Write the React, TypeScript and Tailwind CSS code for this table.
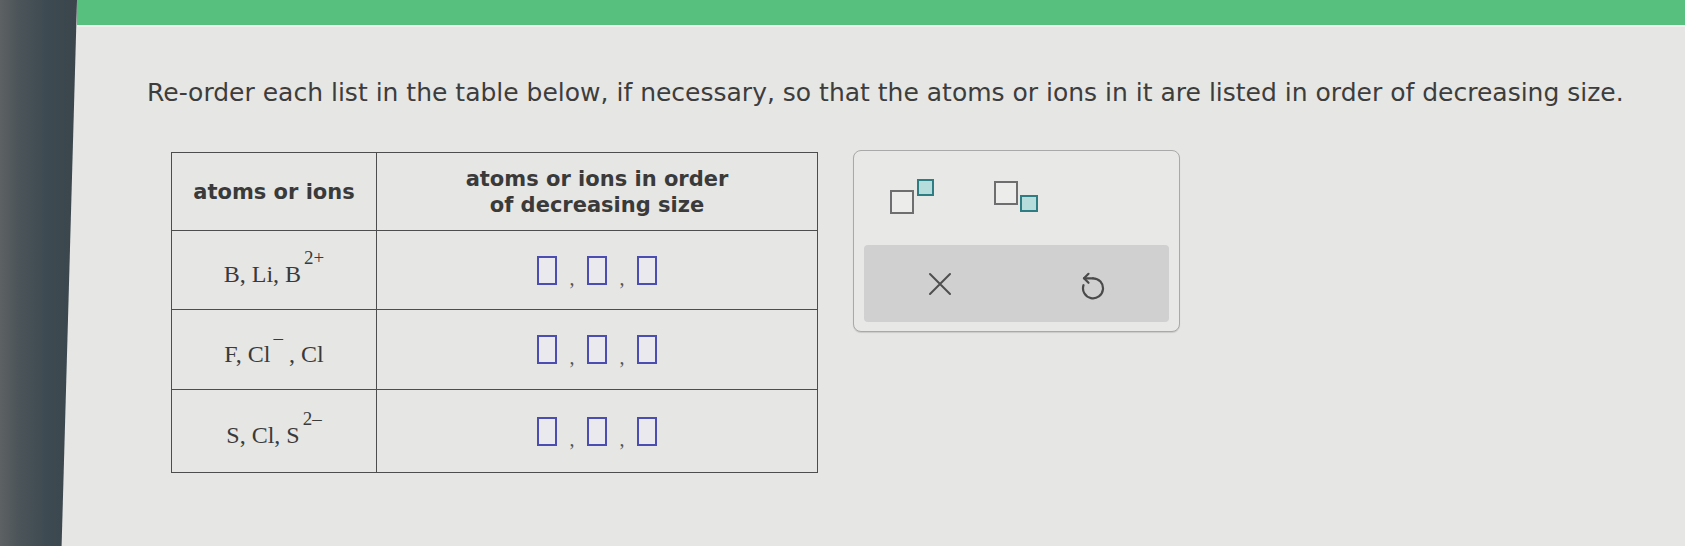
import React from "react";

function Boxes() {
  return (
    <div className="flex items-end justify-center">
      <div className="h-[29px] w-[20px] border-2 border-[#4b4db3] bg-[#e9e9ee]" />
      <span className="w-[30px] text-center font-['Liberation_Serif',serif] text-[20px] leading-[14px] text-[#555]">,</span>
      <div className="h-[29px] w-[20px] border-2 border-[#4b4db3] bg-[#e9e9ee]" />
      <span className="w-[30px] text-center font-['Liberation_Serif',serif] text-[20px] leading-[14px] text-[#555]">,</span>
      <div className="h-[29px] w-[20px] border-2 border-[#4b4db3] bg-[#e9e9ee]" />
    </div>
  );
}

function Sup({ children }: { children: React.ReactNode }) {
  return <span className="relative bottom-[18px] ml-[3px] text-[19px] leading-none">{children}</span>;
}

export default function App() {
  const rows: { label: React.ReactNode; h: string }[] = [
    {
      label: (
        <>
          B, Li, B<Sup>2+</Sup>
        </>
      ),
      h: "h-[79px]",
    },
    {
      label: (
        <>
          F, Cl<Sup>&#8211;</Sup> , Cl
        </>
      ),
      h: "h-[80px]",
    },
    {
      label: (
        <>
          S, Cl, S<Sup>2&#8211;</Sup>
        </>
      ),
      h: "h-[83px]",
    },
  ];

  return (
    <div className="flex h-[546px] w-[1685px] overflow-hidden bg-[#e6e6e4]">
      <div className="w-[77px] shrink-0 bg-[linear-gradient(to_right,#5d6163_0%,#4b5459_25%,#3e4a51_60%,#3a454c_100%)] [clip-path:polygon(0_0,100%_0,80%_100%,0_100%)]" />
      <div className="flex flex-1 flex-col">
        <div className="h-[25px] bg-[#57c07e]" />
        <div className="h-[2px] bg-[#efefed]" />
        <div className="pl-[70px] pt-[48px] font-['DejaVu_Sans',sans-serif]">
          <p className="text-[25px] leading-[36px] text-[#3d3d3d]">
            Re-order each list in the table below, if necessary, so that the atoms or ions in it are listed in order of decreasing size.
          </p>
          <div className="ml-[24px] mt-[41px] flex items-start gap-[35px]">
            <table className="border-collapse border border-[#4d4d4d]">
              <thead>
                <tr className="h-[78px]">
                  <th className="w-[205px] border border-[#4d4d4d] text-center text-[21px] font-bold leading-[26px] text-[#3a3a3a]">
                    atoms or ions
                  </th>
                  <th className="w-[441px] border border-[#4d4d4d] text-center text-[21px] font-bold leading-[26px] text-[#3a3a3a]">
                    atoms or ions in order
                    <br />
                    of decreasing size
                  </th>
                </tr>
              </thead>
              <tbody>
                {rows.map((r, i) => (
                  <tr key={i} className={r.h}>
                    <td className="border border-[#4d4d4d] pt-[8px] text-center font-['Liberation_Serif',serif] text-[24px] text-[#3a3a3a]">
                      {r.label}
                    </td>
                    <td className="border border-[#4d4d4d]">
                      <Boxes />
                    </td>
                  </tr>
                ))}
              </tbody>
            </table>

            <div className="-mt-[2px] flex h-[182px] w-[327px] flex-col rounded-[8px] border border-[#a9a9a9] bg-[#e8e8e6] shadow-[0_1px_1px_rgba(0,0,0,0.12)]">
              <div className="flex h-[94px] items-start gap-[60px] pl-[36px] pt-[28px]">
                <div className="flex items-start">
                  <div className="mt-[11px] h-[24px] w-[24px] border-2 border-[#6e6e6e] bg-[#ececea]" />
                  <div className="ml-[3px] h-[17px] w-[17px] border-2 border-[#2e7d83] bg-[#b7dcdc]" />
                </div>
                <div className="mt-[2px] flex items-start">
                  <div className="h-[24px] w-[24px] border-2 border-[#6e6e6e] bg-[#ececea]" />
                  <div className="ml-[2px] mt-[14px] h-[17px] w-[18px] border-2 border-[#2e7d83] bg-[#b7dcdc]" />
                </div>
              </div>
              <div className="ml-[10px] grid h-[77px] w-[305px] grid-cols-2 place-items-center rounded-[4px] bg-[#cfd0cf]">
                <svg width="24" height="24" viewBox="0 0 24 24" fill="none" stroke="#4e4e4e" strokeWidth="2" strokeLinecap="round">
                  <path d="M2 2 L22 22 M22 2 L2 22" />
                </svg>
                <svg width="24" height="29" viewBox="0 0 24 29" fill="none" stroke="#4a4a4a" strokeWidth="2.2" strokeLinecap="round" strokeLinejoin="round" className="mt-[3px]">
                  <path d="M12 7.3 A10 10 0 1 1 2.5 14.2" />
                  <path d="M3 7.3 H12" />
                  <path d="M7.5 2.8 L3 7.3 L7.5 11.8" />
                </svg>
              </div>
            </div>
          </div>
        </div>
      </div>
    </div>
  );
}
